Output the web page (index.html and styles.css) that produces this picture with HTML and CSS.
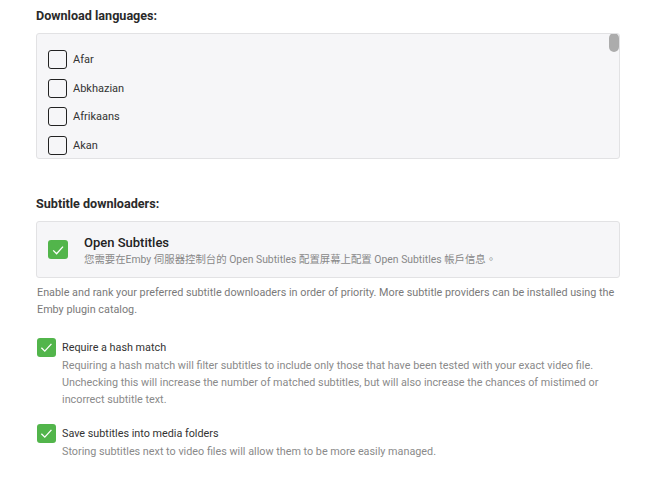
FILE: index.html
```html
<!DOCTYPE html>
<html>
<head>
<meta charset="utf-8">
<link rel="stylesheet" href="styles.css">
</head>
<body>
<div class="page">
  <h2 class="heading">Download languages:</h2>
  <div class="langbox">
    <div class="langlist">
      <label class="lang"><span class="cb"></span><span class="lang-name">Afar</span></label>
      <label class="lang"><span class="cb"></span><span class="lang-name">Abkhazian</span></label>
      <label class="lang"><span class="cb"></span><span class="lang-name">Afrikaans</span></label>
      <label class="lang"><span class="cb"></span><span class="lang-name">Akan</span></label>
    </div>
    <span class="thumb"></span>
  </div>

  <h2 class="heading heading-2">Subtitle downloaders:</h2>
  <div class="card">
    <span class="cb cb-on cb-card"><svg viewBox="0 0 20 20" width="20" height="20"><path d="M5.2 10.4 L8.6 13.8 L15 6.6" fill="none" stroke="#fff" stroke-width="1.3"/></svg></span>
    <div class="card-text">
      <div class="card-title">Open Subtitles</div>
      <div class="card-sub">您需要在Emby 伺服器控制台的 Open Subtitles 配置屏幕上配置 Open Subtitles 帳戶信息。</div>
    </div>
  </div>
  <p class="desc">Enable and rank your preferred subtitle downloaders in order of priority. More subtitle providers can be installed using the Emby plugin catalog.</p>

  <div class="option option-1">
    <span class="cb cb-on"><svg viewBox="0 0 20 20" width="19" height="19"><path d="M4.6 10.2 L8.2 13.8 L15.2 6.2" fill="none" stroke="#fff" stroke-width="1.4"/></svg></span>
    <span class="opt-label">Require a hash match</span>
    <p class="opt-desc">Requiring a hash match will filter subtitles to include only those that have been tested with your exact video file. Unchecking this will increase the number of matched subtitles, but will also increase the chances of mistimed or incorrect subtitle text.</p>
  </div>
  <div class="option option-2">
    <span class="cb cb-on"><svg viewBox="0 0 20 20" width="19" height="19"><path d="M4.6 10.2 L8.2 13.8 L15.2 6.2" fill="none" stroke="#fff" stroke-width="1.4"/></svg></span>
    <span class="opt-label">Save subtitles into media folders</span>
    <p class="opt-desc">Storing subtitles next to video files will allow them to be more easily managed.</p>
  </div>
</div>
</body>
</html>
```
FILE: styles.css
```css
* { box-sizing: border-box; }
html, body { margin: 0; padding: 0; background: #fff; }
body {
  font-family: Roboto, "Noto Sans CJK TC", "Noto Sans", sans-serif;
  color: #222;
}
.page {
  width: 584px;
  margin-left: 36px;
  padding-top: 8px;
}
.heading {
  margin: 0;
  font-size: 12.6px;
  line-height: 16px;
  font-weight: 700;
  color: #2a2a2a;
}
.heading-2 { margin-top: 37px; }

.langbox {
  position: relative;
  margin-top: 9px;
  height: 126px;
  background: #f6f6f8;
  border: 1px solid #e2e2e4;
  border-radius: 3px;
  overflow: hidden;
}
.langlist {
  padding: 16px 0 0 11px;
  display: flex;
  flex-direction: column;
  gap: 9.5px;
}
.lang {
  display: flex;
  align-items: center;
  gap: 6px;
  height: 19px;
}
.cb {
  flex: none;
  width: 19px;
  height: 19px;
  border: 1.5px solid #222;
  border-radius: 3px;
  display: flex;
  align-items: center;
  justify-content: center;
}
.lang-name {
  font-size: 11px;
  color: #333;
}
.thumb {
  position: absolute;
  top: -1px;
  right: 0;
  width: 10px;
  height: 19px;
  border-radius: 5px;
  background: #acacac;
}

.card {
  margin-top: 9px;
  height: 57px;
  background: #f6f6f8;
  border: 1px solid #e2e2e4;
  border-radius: 3px;
  display: flex;
  align-items: center;
  padding-left: 11px;
  gap: 16px;
}
.cb-on {
  border: none;
  background: #52b54b;
}
.cb-card { width: 20px; height: 19px; }
.card-text { padding-top: 2px; }
.card-title {
  font-size: 13px;
  line-height: 17px;
  font-weight: 500;
  color: #222;
}
.card-sub {
  font-size: 10.4px;
  line-height: 17px;
  color: #888;
}
.desc {
  margin: 6px 0 0 1px;
  font-size: 10.8px;
  line-height: 17px;
  color: #7a7a7a;
}
.option {
  display: grid;
  grid-template-columns: 19px 1fr;
  column-gap: 6px;
  align-items: center;
}
.option-1 { margin-top: 20px; margin-left: 1px; }
.option-2 { margin-top: 16px; margin-left: 1px; }
.opt-label {
  font-size: 10.8px;
  color: #333;
}
.opt-desc {
  grid-column: 2;
  margin: 0;
  font-size: 10.8px;
  line-height: 17px;
  color: #8a8a8a;
}
```
